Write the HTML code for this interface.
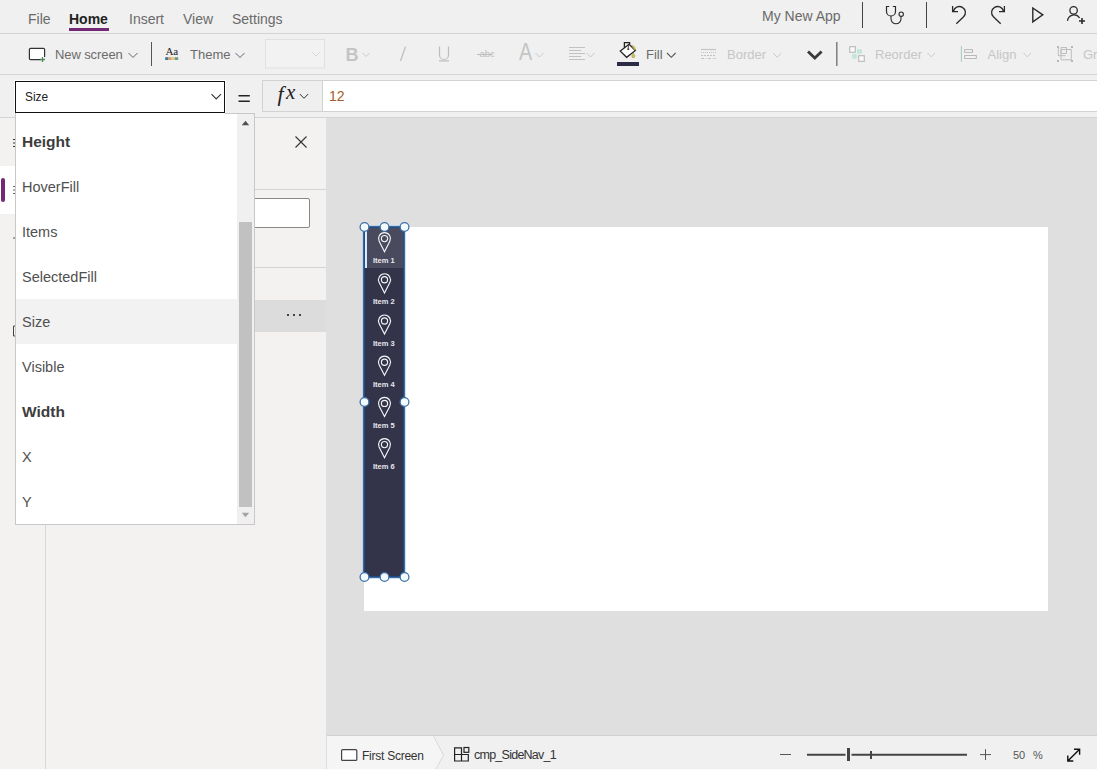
<!DOCTYPE html>
<html><head><meta charset="utf-8">
<style>
*{margin:0;padding:0;box-sizing:border-box}
html,body{width:1097px;height:770px;overflow:hidden;background:#f0f0f0;font-family:"Liberation Sans",sans-serif;position:relative}
.a{position:absolute}
.t{position:absolute;white-space:nowrap;line-height:1}
svg{position:absolute;overflow:visible}
</style></head><body>

<!-- menu bar -->
<div class="a" style="left:0;top:0;width:1097px;height:33px;background:#f0f0f0"></div>
<div class="a" style="left:0;top:33px;width:1097px;height:1px;background:#d4d4d4"></div>
<div class="t" style="left:28px;top:12px;font-size:14px;color:#6a6a6a">File</div>
<div class="t" style="left:69px;top:12px;font-size:14px;font-weight:bold;color:#222">Home</div>
<div class="a" style="left:69px;top:28px;width:40px;height:3px;background:#742774"></div>
<div class="t" style="left:129px;top:12px;font-size:14px;color:#6a6a6a">Insert</div>
<div class="t" style="left:183px;top:12px;font-size:14px;color:#6a6a6a">View</div>
<div class="t" style="left:232px;top:12px;font-size:14px;color:#6a6a6a">Settings</div>
<div class="t" style="left:762px;top:9px;font-size:14px;color:#6a6a6a">My New App</div>


<div class="a" style="left:862px;top:2px;width:1px;height:26px;background:#444"></div>
<div class="a" style="left:926px;top:2px;width:1px;height:26px;background:#444"></div>
<svg width="1097" height="34" style="left:0;top:0" fill="none" stroke="#2a2a2a" stroke-width="1.2">
 <path d="M886 6.5H889.2M892.8 6.5H896M886.5 6.2V11.5A4.5 4.5 0 0 0 895.5 11.5V6.2" stroke-width="1.2"/>
 <path d="M891 16V18.8A4.9 4.9 0 0 0 901 18.8V16.4" stroke-width="1.1"/>
 <circle cx="901.2" cy="14.2" r="2.2" stroke-width="1.1"/>
 <path d="M953.6 11A6 6 0 1 1 963.6 16.8L956.3 23.8M952.6 6V11.6H958" stroke-width="1.3"/>
 <path d="M1003.4 11A6 6 0 1 0 993.4 16.8L1000.7 23.8M1004.4 6V11.6H999" stroke-width="1.3"/>
 <path d="M1032.8 8L1042.8 14.8L1032.8 21.8Z" stroke-width="1.4"/>
 <circle cx="1073.6" cy="10.4" r="3.7" stroke-width="1.3"/>
 <path d="M1067.5 20.8A6.6 6.6 0 0 1 1079.6 18" stroke-width="1.3"/>
 <path d="M1082 18V24M1079 21H1085" stroke-width="1.6"/>
</svg>
<!-- toolbar -->
<!-- toolbar items -->
<svg width="1097" height="75" style="left:0;top:0" fill="none">
 <path d="M41 59.6H30.6A1.2 1.2 0 0 1 29.4 58.4V49.5A1.2 1.2 0 0 1 30.6 48.3H43.4A1.2 1.2 0 0 1 44.6 49.5V57" stroke="#333" stroke-width="1.2" fill="#fff"/>
 <path d="M42.5 57V62M40 59.5H45" stroke="#4f8a5b" stroke-width="1.3"/>
 <path d="M128.5 53L133 57.5L137.5 53" stroke="#666" stroke-width="1"/>
 <rect x="151" y="42" width="1" height="24" fill="#555" stroke="none"/>
 <rect x="165.2" y="57.2" width="3.2" height="2.8" fill="#3d75a3" stroke="none"/>
 <rect x="168.4" y="57.2" width="3.2" height="2.8" fill="#d79b68" stroke="none"/>
 <rect x="171.6" y="57.2" width="3.2" height="2.8" fill="#e5c67e" stroke="none"/>
 <rect x="174.8" y="57.2" width="3.4" height="2.8" fill="#679e87" stroke="none"/>
 <path d="M235.5 53L240 57.5L244.5 53" stroke="#666" stroke-width="1"/>
 <rect x="265.5" y="39.5" width="59" height="28.5" stroke="#e0e0e0" fill="#f2f2f2"/>
 <path d="M312 52L316 56L320 52" stroke="#d8d8d8" stroke-width="1"/>
 <path d="M362.5 53L366 56.5L369.5 53" stroke="#c8c8c8" stroke-width="1"/>
 <path d="M405.5 46.5L400.5 61" stroke="#bdbdbd" stroke-width="1.2"/>
 <path d="M439.5 46.5V55A4.5 4.5 0 0 0 448.5 55V46.5M439 60.8H449" stroke="#bdbdbd" stroke-width="1.2"/>
 <path d="M477 54.5H493" stroke="#bdbdbd" stroke-width="1"/>
 <path d="M535.5 53L539.5 57L543.5 53" stroke="#c8c8c8" stroke-width="1"/>
 <path d="M569 47.5H585M569 50.5H581M569 53.5H585M569 56.5H581M569 59.5H585" stroke="#c2c2c2" stroke-width="1.1"/>
 <path d="M586.5 53L590.5 57L594.5 53" stroke="#c8c8c8" stroke-width="1"/>
  <path d="M620.3 51.1L626.6 57.3L635.4 50.5L629.1 44.3Z" stroke="#222" stroke-width="1.3" fill="#fff"/>
 <path d="M624.4 47.8V42.6H629.6V44.2" stroke="#222" stroke-width="1.3"/>
 <path d="M628.3 44V48.6" stroke="#333" stroke-width="0.9"/>
 <circle cx="628.3" cy="49.2" r="1.1" fill="#555" stroke="none"/>
 <path d="M631.5 45.2Q635.6 46 635.4 50.4L633.4 48.6Z" fill="#cfc35a" stroke="#9a9040" stroke-width=".5"/>
 <path d="M633.3 53.2Q630.8 56.3 632.4 57.8Q634.8 58.4 635 55.6Z" fill="#cfc35a" stroke="#9a9040" stroke-width=".5"/>
<rect x="617" y="62" width="22" height="4" fill="#2b2b45" stroke="none"/>
 <path d="M667 53L671.3 57.3L675.6 53" stroke="#555" stroke-width="1.1"/>
 <path d="M701 49.5H716" stroke="#c2c2c2" stroke-width="1.1"/>
 <path d="M701 52.5H716" stroke="#c2c2c2" stroke-width="1.1" stroke-dasharray="1 1"/>
 <path d="M701 55.5H716" stroke="#c2c2c2" stroke-width="1.1" stroke-dasharray="2 1"/>
 <path d="M701 58.5H704M705.5 58.5H706.5M708 58.5H711M712.5 58.5H713.5M714.5 58.5H716" stroke="#c2c2c2" stroke-width="1.1"/>
 <path d="M773 53L777.2 57.2L781.4 53" stroke="#c8c8c8" stroke-width="1"/>
 <path d="M808 51.5L814.8 58L821.6 51.5" stroke="#3a3a3a" stroke-width="2.8"/>
 <rect x="836.3" y="42" width="1.1" height="24" fill="#555" stroke="none"/>
 <rect x="857" y="49.2" width="4.8" height="4.5" fill="#c2e5dd" stroke="none"/>
 <rect x="852.2" y="54.1" width="4.6" height="4.7" fill="#c2e5dd" stroke="none"/>
 <rect x="849.7" y="46.7" width="5.6" height="5.6" stroke="#b8b8b8" stroke-width="1.1" fill="#fafafa"/>
 <rect x="858.7" y="55.7" width="5.6" height="5.6" stroke="#b8b8b8" stroke-width="1.1" fill="#fafafa"/>
 <path d="M927.5 53L931.3 56.8L935.1 53" stroke="#c8c8c8" stroke-width="1"/>
 <path d="M961.4 46V61.8" stroke="#a9cbc2" stroke-width="1.1"/>
 <rect x="964.7" y="49.7" width="7.8" height="2.6" stroke="#b3b3b3" stroke-width="1" fill="#fafafa"/>
 <rect x="964.7" y="55.6" width="11.6" height="2.8" stroke="#b3b3b3" stroke-width="1" fill="#fafafa"/>
 <path d="M1023.5 53L1027.3 56.8L1031.1 53" stroke="#c8c8c8" stroke-width="1"/>
 <path d="M1058.3 47.5V55.7H1065.5M1061 49.5H1071.3V59.8H1061Z" stroke="#bdbdbd" stroke-width="1" fill="none"/>
 <path d="M1061 47.5H1066.5V53.5H1061V47.5" stroke="#bdbdbd" stroke-width="1" fill="none"/>
 <rect x="1057" y="46" width="2" height="2" fill="#b5b5b5" stroke="none"/>
 <rect x="1071" y="46" width="2" height="2" fill="#b5b5b5" stroke="none"/>
 <rect x="1057" y="60" width="2" height="2" fill="#b5b5b5" stroke="none"/>
 <rect x="1071" y="60" width="2" height="2" fill="#b5b5b5" stroke="none"/>
</svg>
<div class="t" style="left:55px;top:48px;font-size:13px;color:#6b6b6b;letter-spacing:-0.1px">New screen</div>
<div class="t" style="left:165.5px;top:45.5px;font-size:11px;font-family:'Liberation Serif',serif;color:#222;letter-spacing:-0.3px">Aa</div>
<div class="t" style="left:190px;top:48px;font-size:13px;color:#6b6b6b">Theme</div>
<div class="t" style="left:345.5px;top:45.5px;font-size:18px;font-weight:bold;color:#c4c4c4">B</div>
<div class="t" style="left:479.5px;top:49px;font-size:9.5px;color:#bdbdbd">abc</div>
<div class="t" style="left:518.5px;top:41px;font-size:23px;color:#c4c4c4;transform:scaleX(0.86);transform-origin:0 0">A</div>
<div class="t" style="left:646px;top:48px;font-size:13px;color:#6b6b6b">Fill</div>
<div class="t" style="left:727px;top:48px;font-size:13px;color:#c6c6c6">Border</div>
<div class="t" style="left:875px;top:48px;font-size:13px;color:#c6c6c6">Reorder</div>
<div class="t" style="left:987.5px;top:48px;font-size:13px;color:#c6c6c6">Align</div>
<div class="t" style="left:1083px;top:48px;font-size:13px;color:#c6c6c6">Gr</div>

<div class="a" style="left:0;top:74px;width:1097px;height:1px;background:#d4d4d4"></div>

<!-- formula bar -->
<div class="a" style="left:0;top:117px;width:1097px;height:1px;background:#d4d4d4"></div>

<!-- formula bar items -->
<div class="a" style="left:322px;top:80px;width:775px;height:32px;background:#fff;border-top:1px solid #d2d2d2;border-bottom:1px solid #d2d2d2"></div>
<div class="a" style="left:262px;top:80px;width:61px;height:32px;background:#efefef;border:1px solid #d2d2d2"></div>
<div class="t" style="left:329px;top:89px;font-size:14px;color:#a65a24">12</div>
<svg width="1097" height="120" style="left:0;top:0" fill="none">
 <path d="M238.5 95.8H249.8M238.5 101.2H249.8" stroke="#222" stroke-width="1.6"/>
 <path d="M299.8 94L304 98.3L308.2 94" stroke="#333" stroke-width="1"/>
</svg>
<div class="t" style="left:277.5px;top:83.3px;font-size:22px;font-family:'Liberation Serif',serif;font-style:italic;color:#222">f</div>
<div class="t" style="left:286px;top:82px;font-size:21px;font-family:'Liberation Serif',serif;font-style:italic;color:#222">x</div>
<!-- left rail -->
<div class="a" style="left:0;top:118px;width:45px;height:652px;background:#f3f2f1"></div>
<div class="a" style="left:45px;top:118px;width:1px;height:652px;background:#dad8d6"></div>
<!-- panel -->
<div class="a" style="left:46px;top:118px;width:280px;height:652px;background:#f3f2f1"></div>

<!-- rail details -->
<div class="a" style="left:0;top:166px;width:45px;height:48px;background:#fff"></div>
<div class="a" style="left:1px;top:178px;width:4px;height:24px;background:#742774;border-radius:2px"></div>
<svg width="60" height="400" style="left:0;top:0" fill="none" stroke="#333" stroke-width="1">
 <path d="M13 139.5H16M13 143H16M13 146.5H16"/>
 <path d="M13 186.5H16M13 190H16M13 193.5H16" stroke="#666"/>
 <path d="M13 238H16" stroke="#555"/>
 <path d="M13.5 326V336H16M13.5 326H16" stroke="#444"/>
</svg>
<!-- panel details -->
<svg width="330" height="340" style="left:0;top:0" fill="none">
 <path d="M295.5 136.5L306.5 147.5M306.5 136.5L295.5 147.5" stroke="#333" stroke-width="1.1"/>
</svg>
<div class="a" style="left:46px;top:189px;width:280px;height:1px;background:#d6d4d2"></div>
<div class="a" style="left:62px;top:198px;width:248px;height:30px;background:#fff;border:1px solid #8a8886;border-radius:2px"></div>
<div class="a" style="left:46px;top:267px;width:280px;height:1px;background:#d6d4d2"></div>
<div class="a" style="left:46px;top:300px;width:280px;height:32px;background:#dcdcdc"></div>
<div class="a" style="left:287px;top:314px;width:2px;height:2px;background:#444"></div>
<div class="a" style="left:293px;top:314px;width:2px;height:2px;background:#444"></div>
<div class="a" style="left:299px;top:314px;width:2px;height:2px;background:#444"></div>
<!-- canvas -->
<div class="a" style="left:326px;top:118px;width:771px;height:617px;background:#dfdfdf"></div>
<div class="a" style="left:364px;top:227px;width:684px;height:384px;background:#fff"></div>
<!-- nav component -->
<div class="a" style="left:364px;top:227px;width:40px;height:350px;background:#33334a"></div>
<div class="a" style="left:364px;top:227px;width:40px;height:41px;background:#4a4a5e"></div>
<div class="a" style="left:365px;top:231px;width:2px;height:37px;background:#d8ecfb"></div>
<svg width="1097" height="600" style="left:0;top:0" fill="none" stroke="#f4f4f8" stroke-width="1.15">
<path d="M379.17 241.35L384.5 251.70L389.83 241.35A6.0 6.0 0 1 0 379.17 241.35Z"/><circle cx="384.5" cy="238.60" r="3.1"/>
<path d="M379.17 282.55L384.5 292.90L389.83 282.55A6.0 6.0 0 1 0 379.17 282.55Z"/><circle cx="384.5" cy="279.80" r="3.1"/>
<path d="M379.17 323.75L384.5 334.10L389.83 323.75A6.0 6.0 0 1 0 379.17 323.75Z"/><circle cx="384.5" cy="321.00" r="3.1"/>
<path d="M379.17 364.95L384.5 375.30L389.83 364.95A6.0 6.0 0 1 0 379.17 364.95Z"/><circle cx="384.5" cy="362.20" r="3.1"/>
<path d="M379.17 406.15L384.5 416.50L389.83 406.15A6.0 6.0 0 1 0 379.17 406.15Z"/><circle cx="384.5" cy="403.40" r="3.1"/>
<path d="M379.17 447.35L384.5 457.70L389.83 447.35A6.0 6.0 0 1 0 379.17 447.35Z"/><circle cx="384.5" cy="444.60" r="3.1"/>
</svg>
<div class="t" style="left:373px;top:257.2px;font-size:7.5px;font-weight:bold;color:#e8e8ee">Item 1</div>
<div class="t" style="left:373px;top:298.4px;font-size:7.5px;font-weight:bold;color:#e8e8ee">Item 2</div>
<div class="t" style="left:373px;top:339.6px;font-size:7.5px;font-weight:bold;color:#e8e8ee">Item 3</div>
<div class="t" style="left:373px;top:380.8px;font-size:7.5px;font-weight:bold;color:#e8e8ee">Item 4</div>
<div class="t" style="left:373px;top:422.0px;font-size:7.5px;font-weight:bold;color:#e8e8ee">Item 5</div>
<div class="t" style="left:373px;top:463.2px;font-size:7.5px;font-weight:bold;color:#e8e8ee">Item 6</div>
<svg width="1097" height="600" style="left:0;top:0" fill="none"><rect x="363" y="226" width="42" height="352" stroke="#aacdec" stroke-width="1.2"/><rect x="364" y="227" width="40" height="350" stroke="#1b4f8c" stroke-width="1.6"/></svg>
<svg width="1097" height="600" style="left:0;top:0" fill="#f4fbff" stroke="#3a6fa8" stroke-width="1.3">
 <circle cx="364.5" cy="227" r="4.4"/><circle cx="384.5" cy="227" r="4.4"/><circle cx="404.5" cy="227" r="4.4"/>
 <circle cx="364.5" cy="402" r="4.4"/><circle cx="404.5" cy="402" r="4.4"/>
 <circle cx="364.5" cy="577" r="4.4"/><circle cx="384.5" cy="577" r="4.4"/><circle cx="404.5" cy="577" r="4.4"/>
</svg>
<!-- status bar -->
<div class="a" style="left:326px;top:735px;width:1px;height:35px;background:#dedede"></div>
<div class="a" style="left:327px;top:735px;width:770px;height:1px;background:#d0d0d0"></div>
<div class="a" style="left:327px;top:736px;width:770px;height:34px;background:#f0f0f0"></div>



<svg width="1097" height="770" style="left:0;top:0"><path d="M327 736H433.5L443.5 755.2L436 769H327Z" fill="#f5f5f5"/></svg>
<svg width="1097" height="770" style="left:0;top:0" fill="none">
 <path d="M433.5 736L443.5 755.2L436 769" stroke="#d9d9d9" stroke-width="1"/>
 <rect x="341.6" y="749.6" width="15.2" height="10.8" rx="1" stroke="#444" stroke-width="1.2" fill="#fff"/>
 <path d="M454.6 754.5H461.5V761H454.6ZM454.6 754.5V747.8H461.5V754.5M461.5 754.5H468.3V761H461.5" stroke="#222" stroke-width="1.2"/>
 <rect x="464" y="747.5" width="4.8" height="4.8" stroke="#222" stroke-width="1.2"/>
 <path d="M780 754.5H791" stroke="#555" stroke-width="1"/>
 <path d="M807 754.7H967" stroke="#444" stroke-width="2"/>
 <rect x="845.5" y="746.5" width="6" height="16" fill="#f0f0f0" stroke="none"/>
 <rect x="847" y="748" width="3" height="13" fill="#444" stroke="none"/>
 <rect x="870" y="751" width="2" height="8" fill="#444" stroke="none"/>
 <path d="M980 754.6H991M985.5 749.2V760" stroke="#555" stroke-width="1"/>
 <path d="M1067.8 761L1079.6 749.2M1067.8 755.5V761H1073.3M1074 749.2H1079.6V754.8" stroke="#111" stroke-width="1.4"/>
</svg>
<div class="t" style="left:362px;top:750px;font-size:12px;color:#333;letter-spacing:-0.25px">First Screen</div>
<div class="t" style="left:474px;top:749.2px;font-size:12.5px;color:#333;letter-spacing:-0.75px">cmp_SideNav_1</div>
<div class="t" style="left:1013px;top:750px;font-size:11px;color:#555">50</div>
<div class="t" style="left:1033px;top:750px;font-size:11px;color:#555">%</div>
<div class="a" style="left:0;top:769px;width:1097px;height:1px;background:#fcfcfc"></div>
<!-- property dropdown -->
<div class="a" style="left:14px;top:80px;width:212px;height:34px;background:#fff"></div>
<div class="a" style="left:15px;top:81px;width:210px;height:32px;background:#fff;border:1px solid #111"></div>
<div class="t" style="left:24.5px;top:90.4px;font-size:13.5px;color:#222;transform:scaleX(0.88);transform-origin:0 0">Size</div>
<svg width="240" height="120" style="left:0;top:0" fill="none"><path d="M211.5 94.2L216.2 99L221 94.2" stroke="#333" stroke-width="1.1"/></svg>
<div class="a" style="left:15px;top:113px;width:240px;height:412px;background:#fff;border:1px solid #c8c8c8;border-top:none"></div>
<div class="a" style="left:225px;top:113px;width:30px;height:1px;background:#c8c8c8"></div>
<div class="a" style="left:16px;top:299px;width:221px;height:45px;background:#f2f2f2"></div>
<div class="a" style="left:237px;top:114px;width:17px;height:410px;background:#f0f0f0"></div>
<div class="a" style="left:239px;top:222px;width:13px;height:285px;background:#c1c1c1"></div>
<svg width="260" height="530" style="left:0;top:0"><path d="M241.8 125.2L245.5 120.8L249.2 125.2Z" fill="#505050"/><path d="M241.8 512.8L245.5 517.2L249.2 512.8Z" fill="#a3a3a3"/></svg>
<div class="t" style="left:22px;top:133.5px;font-size:15.5px;font-weight:bold;color:#3d3d3d">Height</div>
<div class="t" style="left:22px;top:179.5px;font-size:14.5px;color:#505050">HoverFill</div>
<div class="t" style="left:22px;top:224.5px;font-size:14.5px;color:#505050">Items</div>
<div class="t" style="left:22px;top:269.5px;font-size:14.5px;color:#505050">SelectedFill</div>
<div class="t" style="left:22px;top:314.5px;font-size:14.5px;color:#505050">Size</div>
<div class="t" style="left:22px;top:359.5px;font-size:14.5px;color:#505050">Visible</div>
<div class="t" style="left:22px;top:403.5px;font-size:15.5px;font-weight:bold;color:#3d3d3d">Width</div>
<div class="t" style="left:22px;top:449.5px;font-size:14.5px;color:#505050">X</div>
<div class="t" style="left:22px;top:494.5px;font-size:14.5px;color:#505050">Y</div>
</body></html>
